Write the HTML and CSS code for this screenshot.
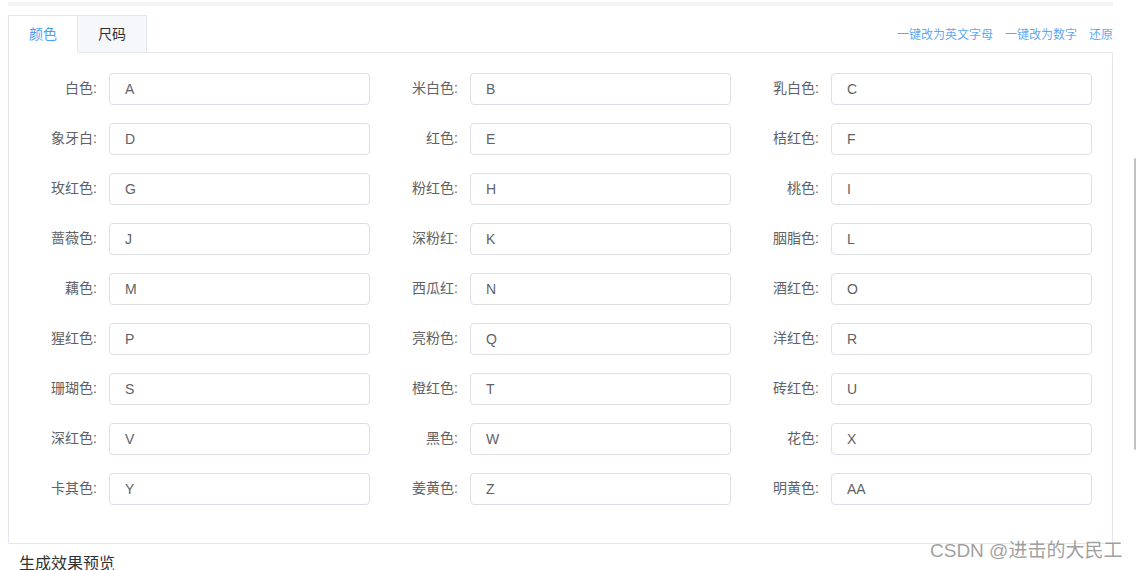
FILE: index.html
```html
<!DOCTYPE html>
<html lang="zh-CN">
<head>
<meta charset="utf-8">
<title>颜色尺码</title>
<link rel="stylesheet" href="styles.css">
</head>
<body>
<div class="page">
  <div class="topbar"></div>
  <div class="tabs">
    <div class="tabs-header">
      <div class="tab active">颜色</div>
      <div class="tab">尺码</div>
      <div class="tabs-fill">
        <a class="action">一键改为英文字母</a>
        <a class="action">一键改为数字</a>
        <a class="action">还原</a>
      </div>
    </div>
    <div class="tabs-content">
      <div class="form-grid">
        <div class="form-item"><label class="form-label">白色:</label><div class="form-input">A</div></div>
        <div class="form-item"><label class="form-label">米白色:</label><div class="form-input">B</div></div>
        <div class="form-item"><label class="form-label">乳白色:</label><div class="form-input">C</div></div>
        <div class="form-item"><label class="form-label">象牙白:</label><div class="form-input">D</div></div>
        <div class="form-item"><label class="form-label">红色:</label><div class="form-input">E</div></div>
        <div class="form-item"><label class="form-label">桔红色:</label><div class="form-input">F</div></div>
        <div class="form-item"><label class="form-label">玫红色:</label><div class="form-input">G</div></div>
        <div class="form-item"><label class="form-label">粉红色:</label><div class="form-input">H</div></div>
        <div class="form-item"><label class="form-label">桃色:</label><div class="form-input">I</div></div>
        <div class="form-item"><label class="form-label">蔷薇色:</label><div class="form-input">J</div></div>
        <div class="form-item"><label class="form-label">深粉红:</label><div class="form-input">K</div></div>
        <div class="form-item"><label class="form-label">胭脂色:</label><div class="form-input">L</div></div>
        <div class="form-item"><label class="form-label">藕色:</label><div class="form-input">M</div></div>
        <div class="form-item"><label class="form-label">西瓜红:</label><div class="form-input">N</div></div>
        <div class="form-item"><label class="form-label">酒红色:</label><div class="form-input">O</div></div>
        <div class="form-item"><label class="form-label">猩红色:</label><div class="form-input">P</div></div>
        <div class="form-item"><label class="form-label">亮粉色:</label><div class="form-input">Q</div></div>
        <div class="form-item"><label class="form-label">洋红色:</label><div class="form-input">R</div></div>
        <div class="form-item"><label class="form-label">珊瑚色:</label><div class="form-input">S</div></div>
        <div class="form-item"><label class="form-label">橙红色:</label><div class="form-input">T</div></div>
        <div class="form-item"><label class="form-label">砖红色:</label><div class="form-input">U</div></div>
        <div class="form-item"><label class="form-label">深红色:</label><div class="form-input">V</div></div>
        <div class="form-item"><label class="form-label">黑色:</label><div class="form-input">W</div></div>
        <div class="form-item"><label class="form-label">花色:</label><div class="form-input">X</div></div>
        <div class="form-item"><label class="form-label">卡其色:</label><div class="form-input">Y</div></div>
        <div class="form-item"><label class="form-label">姜黄色:</label><div class="form-input">Z</div></div>
        <div class="form-item"><label class="form-label">明黄色:</label><div class="form-input">AA</div></div>
      </div>
    </div>
  </div>
  <div class="preview-title">生成效果预览</div>
</div>
<div class="watermark">CSDN @进击的大民工</div>
<div class="scrollbar"></div>
</body>
</html>
```
FILE: styles.css
```css
html, body {
  margin: 0;
  padding: 0;
  background: #ffffff;
  overflow: hidden;
}
body {
  width: 1136px;
  height: 570px;
  position: relative;
  font-family: "Liberation Sans", "Noto Sans CJK SC", Arial, sans-serif;
  color: #606266;
}
.page {
  padding: 2px 23px 0 8px;
}
.topbar {
  height: 4px;
  background: #f4f4f5;
  margin-bottom: 9px;
}
.tabs-header {
  display: flex;
  height: 38px;
}
.tab {
  box-sizing: border-box;
  height: 38px;
  padding: 0 20px;
  font-size: 14px;
  line-height: 36px;
  border-top: 1px solid #e4e7ed;
  color: #303133;
}
.tab.active {
  border-left: 1px solid #e4e7ed;
  color: #4a9ff9;
  background: #fff;
}
.tab:not(.active) {
  background: #f5f7fa;
  border-left: 1px solid #e4e7ed;
  border-right: 1px solid #e4e7ed;
  border-bottom: 1px solid #e4e7ed;
}
.tabs-fill {
  flex: 1;
  box-sizing: border-box;
  border-bottom: 1px solid #e4e7ed;
  display: flex;
  justify-content: flex-end;
  align-items: center;
  gap: 12px;
  padding-top: 2px;
}
.action {
  font-size: 12px;
  line-height: 16px;
  color: #5ea8fa;
  cursor: pointer;
}
.tabs-content {
  border: 1px solid #e4e7ed;
  border-top: none;
  padding: 20px 20px 38px 20px;
}
.form-grid {
  display: grid;
  grid-template-columns: repeat(3, 1fr);
  column-gap: 20px;
  row-gap: 18px;
}
.form-item {
  display: flex;
  align-items: center;
  height: 32px;
}
.form-label {
  box-sizing: border-box;
  width: 80px;
  flex: none;
  padding-right: 12px;
  padding-bottom: 2px;
  text-align: right;
  font-size: 14px;
  line-height: 20px;
  color: #606266;
}
.form-input {
  flex: 1;
  box-sizing: border-box;
  height: 32px;
  border: 1px solid #dcdfe6;
  border-radius: 4px;
  padding: 0 15px;
  font-size: 14px;
  line-height: 30px;
  color: #606266;
}
.preview-title {
  margin: 8px 0 0 11px;
  font-size: 16px;
  line-height: 24px;
  color: #303133;
}
.watermark {
  position: absolute;
  left: 930px;
  top: 537px;
  font-size: 19px;
  line-height: 28px;
  color: rgba(128, 128, 128, 0.75);
  white-space: nowrap;
}
.scrollbar {
  position: absolute;
  left: 1134px;
  top: 158px;
  width: 2px;
  height: 292px;
  background: #c1c1c1;
  border-radius: 1px;
}
```
